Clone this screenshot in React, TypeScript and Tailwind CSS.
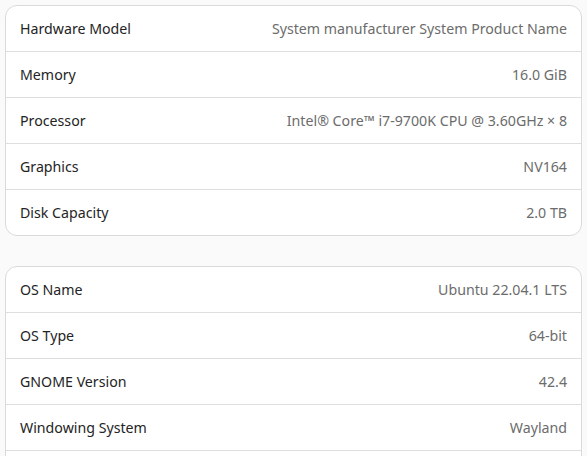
const hardware = [
  ["Hardware Model", "System manufacturer System Product Name"],
  ["Memory", "16.0 GiB"],
  ["Processor", "Intel® Core™ i7-9700K CPU @ 3.60GHz × 8"],
  ["Graphics", "NV164"],
  ["Disk Capacity", "2.0 TB"],
];

// last row sits below the fold, only its top separator shows
const software = [
  ["OS Name", "Ubuntu 22.04.1 LTS"],
  ["OS Type", "64-bit"],
  ["GNOME Version", "42.4"],
  ["Windowing System", "Wayland"],
  ["", ""],
];

function InfoList({ rows }: { rows: string[][] }) {
  return (
    <div className="shrink-0 bg-white border border-[#dadada] rounded-[12px] overflow-hidden">
      {rows.map(([label, value], i) => (
        <div
          key={i}
          className={`px-[14px] flex items-center justify-between ${
            i > 0 ? "border-t border-[#dedede] h-[46px]" : "h-[45px]"
          }`}
        >
          <span className="text-[#242424]">{label}</span>
          <span className="text-[#6c6c6c]">{value}</span>
        </div>
      ))}
    </div>
  );
}

export default function App() {
  return (
    <div
      className="w-[587px] h-[456px] overflow-hidden bg-[#fafafa] pt-[5px] pl-[5px] pr-[5px] text-[14.2px] flex flex-col gap-[30px]"
      style={{ fontFamily: '"Noto Sans", "DejaVu Sans", sans-serif' }}
    >
      <InfoList rows={hardware} />
      <InfoList rows={software} />
    </div>
  );
}
